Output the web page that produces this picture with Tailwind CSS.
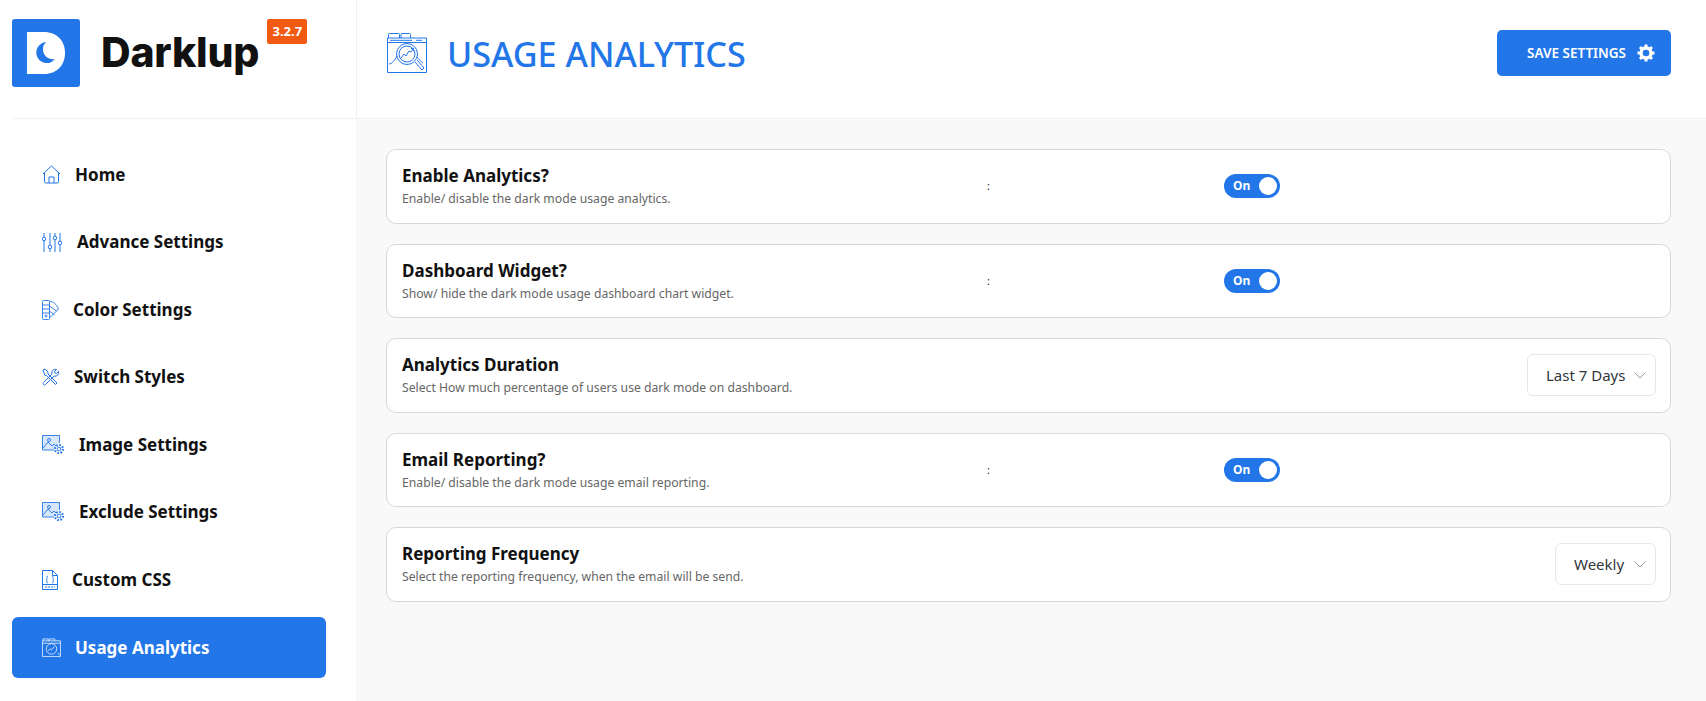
<!DOCTYPE html>
<html lang="en">
<head>
    <meta charset="UTF-8">
    <title>Darklup - Usage Analytics</title>
    <script src="https://cdn.jsdelivr.net/npm/@tailwindcss/browser@4"></script>
</head>
<body class="bg-[#f9f9f9] font-['Noto_Sans',sans-serif]">
<div class="flex h-[701px] overflow-hidden">

    <!-- sidebar -->
    <aside class="w-[356px] shrink-0 bg-white">
        <div class="ml-3 h-[119px] border-b border-[#f1f1f1] flex items-start pt-[19px]">
            <svg class="w-[68px] h-[68px] shrink-0" viewBox="0 0 68 68">
                <rect width="68" height="68" rx="3" fill="#2276e8"/>
                <path d="M15 13h17c13 0 21 9 21 21s-8 21-21 21H15z" fill="#fff"/>
                <path d="M34 23A10.500 10.500 0 1 0 43 40A10 10 0 0 1 34 23z" fill="#2276e8"/>
            </svg>
            <span class="ml-[21px] mt-[5px] font-['Inter',sans-serif] font-extrabold text-[41px] leading-[56px] tracking-[-0.2px] text-[#111]">Darklup</span>
            <span class="ml-2 bg-[#f25a13] text-white text-[13px] font-bold rounded-[2px] w-10 h-[25px] flex items-center justify-center">3.2.7</span>
        </div>

        <nav class="ml-3 w-[314px] mt-[25px] flex flex-col gap-[6.5px] font-bold text-[17px] text-[#111]">
            <a class="h-[61px] rounded-md flex items-center pl-[30px]">
                <svg class="w-[19px] h-[19px] mr-[14px]" viewBox="0 0 19 19" fill="none" stroke="#2276e8"><path d="M1 9l8.500-8 8.500 8M2.500 8v8.500a1.500 1.500 0 0 0 1.500 1.500h11a1.500 1.500 0 0 0 1.500-1.500V8M7 18v-6h5v6"/></svg>
                Home
            </a>
            <a class="h-[61px] rounded-md flex items-center pl-[30px]">
                <svg class="w-5 h-[19px] mr-[15px]" viewBox="0 0 20 19" fill="none" stroke="#2276e8"><path d="M2 0v4M2 8v11M8 0v12M8 16v3M13 0v3M13 7v12M18 0v8M18 12v7"/><circle cx="2" cy="6" r="1.800"/><circle cx="8" cy="14" r="1.800"/><circle cx="13" cy="5" r="1.800"/><circle cx="18" cy="10" r="1.800"/></svg>
                Advance Settings
            </a>
            <a class="h-[61px] rounded-md flex items-center pl-[30px]">
                <svg class="w-[17px] h-5 mr-[14px]" viewBox="0 0 17 20" fill="none" stroke="#2276e8" stroke-width=".9"><rect x=".5" y=".5" width="7" height="19" rx="1"/><path d="M.5 5h7M.5 9h7M.5 13h7M7.500 1c4 1 7 3 9 8l-9 9M7.500 6l7 5M7.500 11l5 4"/><circle cx="4" cy="16" r="1"/></svg>
                Color Settings
            </a>
            <a class="h-[61px] rounded-md flex items-center pl-[30px]">
                <svg class="w-[18px] h-[18px] mr-[14px]" viewBox="0 0 18 18" fill="none" stroke="#2276e8"><path d="M1 2l2-1 3 3v2l9 9-1.500 1.500-9-9H3L1 2zM16.500 3.500a3.500 3.500 0 0 1-4.500 4.500L3.500 16.500a1.400 1.400 0 0 1-2-2L10 6a3.500 3.500 0 0 1 4.500-4.500L12.500 3.500l.5 1.500 1.500.5z"/></svg>
                Switch Styles
            </a>
            <a class="h-[61px] rounded-md flex items-center pl-[30px]">
                <svg class="w-[23px] h-5 mr-[14px]" viewBox="0 0 23 20" fill="none" stroke="#2276e8" stroke-width=".9"><path d="M12 15H.5V.500h17V8" fill="#2276e8" fill-opacity=".18"/><path d="M1 13l5-6 4 4 2-2 2 2"/><circle cx="7" cy="5" r="1.500"/><circle cx="17" cy="14" r="4" stroke-width="2.200" stroke-dasharray="1.600 1.500"/><circle cx="17" cy="14" r="1.800"/></svg>
                Image Settings
            </a>
            <a class="h-[61px] rounded-md flex items-center pl-[30px]">
                <svg class="w-[23px] h-5 mr-[14px]" viewBox="0 0 23 20" fill="none" stroke="#2276e8" stroke-width=".9"><path d="M12 15H.5V.500h17V8" fill="#2276e8" fill-opacity=".18"/><path d="M1 13l5-6 4 4 2-2 2 2"/><circle cx="7" cy="5" r="1.500"/><circle cx="17" cy="14" r="4" stroke-width="2.200" stroke-dasharray="1.600 1.500"/><circle cx="17" cy="14" r="1.800"/></svg>
                Exclude Settings
            </a>
            <a class="h-[61px] rounded-md flex items-center pl-[30px]">
                <svg class="w-4 h-5 mr-[14px]" viewBox="0 0 16 20" fill="none" stroke="#2276e8"><path d="M.5 19.500V.500h10l5 5v14zM10.500.500v5h5M.5 14.500h15"/><path d="M6 6c-1.500 0-1 2-1 2.500S4.500 10 4 10c.5 0 1 .5 1 1s-.5 2 1 2M10 6c1.500 0 1 2 1 2.500s.5 1.500 1 1.500c-.5 0-1 .5-1 1s.5 2-1 2" stroke-width=".9"/><path d="M3 17h10" stroke-dasharray="2 1"/></svg>
                Custom CSS
            </a>
            <a class="h-[61px] rounded-md flex items-center pl-[30px] bg-[#2276e8] text-white">
                <svg class="w-[19px] h-[19px] mr-[14px]" viewBox="0 0 40 40" fill="none" stroke="#fff" stroke-opacity=".75" stroke-width="2"><path d="M1 6h38v33H1zM1 11h38M2 6V2h11v4M15 6V2h12v4"/><circle cx="20" cy="23" r="11"/><path d="M13 27l4-4 3 2 6-7M33 31l5 6"/></svg>
                <span class="pt-[2px]">Usage Analytics</span>
            </a>
        </nav>
    </aside>

    <!-- main -->
    <main class="flex-1 min-w-0">
        <header class="h-[119px] bg-white border-b border-l border-[#f1f1f1] flex items-start justify-between pl-[30px] pr-[35px]">
            <div class="flex items-center mt-[33px] h-10">
                <svg class="w-10 h-10 shrink-0" viewBox="0 0 40 40" fill="none" stroke="#2276e8" stroke-width="1">
                    <path d="M.5 5h39v34.500H.5zM.5 9.500h39M1.500 5V1.500q0-1 1-1h9q1 0 1 1V5M14 5V1.500q0-1 1-1h7.500q1 0 1 1V5M3 7.300h22M29 7.300h6"/>
                    <circle cx="20" cy="21" r="10.500"/>
                    <circle cx="20" cy="21" r="8"/>
                    <path d="M14 25l3-4 2 2 3-5 2 1 2-3M24 15.500h2.500V18M2 31c3 0 6-4 8-8M30 24c2 2 4 5 6 6M28 29l7 8 2-2-7-8"/>
                </svg>
                <h1 class="ml-5 pt-[2px] text-[34.2px] font-medium text-[#2276e8] whitespace-nowrap">USAGE ANALYTICS</h1>
            </div>
            <button class="mt-[30px] w-[174px] h-[46px] bg-[#2276e8] rounded-[5px] text-white text-[13.5px] font-semibold flex items-center pl-[30px]">
                SAVE SETTINGS
                <svg class="w-[18px] h-[18px] ml-[11px]" viewBox="0 0 18 18" fill="none" stroke="#fff"><circle cx="9" cy="9" r="5" stroke-width="3.400"/><path d="M9 .5v3M9 14.500v3M.5 9h3M14.500 9h3M3 3l2.100 2.100M12.900 12.900L15 15M15 3l-2.100 2.100M5.100 12.900L3 15" stroke-width="3"/></svg>
            </button>
        </header>

        <div class="pt-[30px] pl-[30px] pr-[35px] flex flex-col gap-[20px]">
            <div class="h-[74.5px] bg-white border border-[#d8d8d8] rounded-[10px] flex items-center px-[15px]">
                <div class="w-[585px]">
                    <h3 class="text-[17px] leading-[26px] font-bold text-[#111]">Enable Analytics?</h3>
                    <p class="text-[12.2px] leading-[20px] text-[#666]">Enable/ disable the dark mode usage analytics.</p>
                </div>
                <span class="w-[237px] text-[11px] text-[#222]">:</span>
                <div class="w-14 h-[24px] rounded-full bg-[#2276e8] flex items-center justify-between pl-[9px] pr-[3px]">
                    <span class="text-white text-[12px] font-bold">On</span>
                    <span class="w-[18px] h-[18px] rounded-full bg-white"></span>
                </div>
            </div>
            <div class="h-[74.5px] bg-white border border-[#d8d8d8] rounded-[10px] flex items-center px-[15px]">
                <div class="w-[585px]">
                    <h3 class="text-[17px] leading-[26px] font-bold text-[#111]">Dashboard Widget?</h3>
                    <p class="text-[12.2px] leading-[20px] text-[#666]">Show/ hide the dark mode usage dashboard chart widget.</p>
                </div>
                <span class="w-[237px] text-[11px] text-[#222]">:</span>
                <div class="w-14 h-[24px] rounded-full bg-[#2276e8] flex items-center justify-between pl-[9px] pr-[3px]">
                    <span class="text-white text-[12px] font-bold">On</span>
                    <span class="w-[18px] h-[18px] rounded-full bg-white"></span>
                </div>
            </div>
            <div class="h-[74.5px] bg-white border border-[#d8d8d8] rounded-[10px] flex items-center justify-between pl-[15px] pr-[14px]">
                <div>
                    <h3 class="text-[17px] leading-[26px] font-bold text-[#111]">Analytics Duration</h3>
                    <p class="text-[12.2px] leading-[20px] text-[#666]">Select How much percentage of users use dark mode on dashboard.</p>
                </div>
                <div class="w-[129px] h-[42px] bg-white border border-[#e8e8e8] rounded-md flex items-center justify-between pl-[18px] pr-[9px] text-[15px] text-[#32373c]">
                    Last 7 Days
                    <svg class="w-3 h-[7px]" viewBox="0 0 12 7" fill="none" stroke="#999"><path d="M.5.5L6 6l5.500-5.500"/></svg>
                </div>
            </div>
            <div class="h-[74.5px] bg-white border border-[#d8d8d8] rounded-[10px] flex items-center px-[15px]">
                <div class="w-[585px]">
                    <h3 class="text-[17px] leading-[26px] font-bold text-[#111]">Email Reporting?</h3>
                    <p class="text-[12.2px] leading-[20px] text-[#666]">Enable/ disable the dark mode usage email reporting.</p>
                </div>
                <span class="w-[237px] text-[11px] text-[#222]">:</span>
                <div class="w-14 h-[24px] rounded-full bg-[#2276e8] flex items-center justify-between pl-[9px] pr-[3px]">
                    <span class="text-white text-[12px] font-bold">On</span>
                    <span class="w-[18px] h-[18px] rounded-full bg-white"></span>
                </div>
            </div>
            <div class="h-[74.5px] bg-white border border-[#d8d8d8] rounded-[10px] flex items-center justify-between pl-[15px] pr-[14px]">
                <div>
                    <h3 class="text-[17px] leading-[26px] font-bold text-[#111]">Reporting Frequency</h3>
                    <p class="text-[12.2px] leading-[20px] text-[#666]">Select the reporting frequency, when the email will be send.</p>
                </div>
                <div class="w-[101px] h-[42px] bg-white border border-[#e8e8e8] rounded-md flex items-center justify-between pl-[18px] pr-[9px] text-[15px] text-[#32373c]">
                    Weekly
                    <svg class="w-3 h-[7px]" viewBox="0 0 12 7" fill="none" stroke="#999"><path d="M.5.5L6 6l5.500-5.500"/></svg>
                </div>
            </div>
        </div>
    </main>
</div>
</body>
</html>
